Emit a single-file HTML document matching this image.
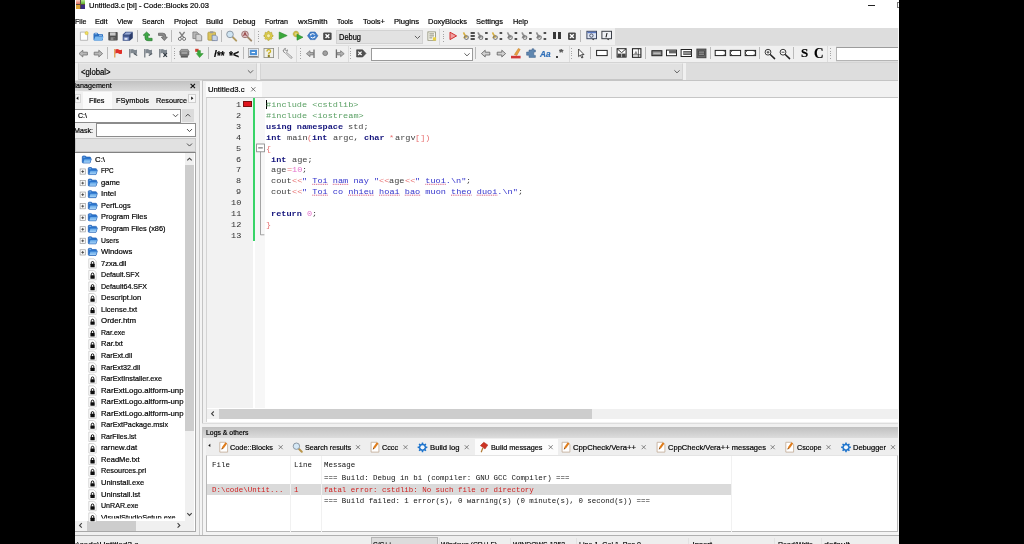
<!DOCTYPE html>
<html><head><meta charset="utf-8"><title>Untitled3.c [bi] - Code::Blocks 20.03</title>
<style>
html,body{margin:0;padding:0;background:#000;overflow:hidden}
#app{position:relative;width:1024px;height:544px;overflow:hidden;background:#000}
#app div{position:absolute;box-sizing:border-box}
#app span{position:absolute;white-space:pre;line-height:12px;height:12px;transform-origin:0 50%}
#app svg{position:absolute;left:0;top:0}
</style></head><body><div id="app">
<div style="left:75px;top:0px;width:824px;height:544px;background:#dddddd;"></div>
<div style="left:75px;top:0px;width:824px;height:28px;background:#ffffff;"></div>
<div style="left:76px;top:0px;width:8.8px;height:8.8px;background:#5a4a40;border-radius:0.8px"></div>
<div style="left:76px;top:0px;width:4.2px;height:4.3px;background:#f09888;background:linear-gradient(180deg,#fbd0c4,#e07060)"></div>
<div style="left:80.6px;top:0px;width:4.2px;height:4.3px;background:#80c840;background:linear-gradient(180deg,#b8e890,#60b030)"></div>
<div style="left:76px;top:4.7px;width:4.2px;height:4px;background:#dca434;"></div>
<div style="left:80.6px;top:4.7px;width:4.2px;height:4px;background:#3a2c80;"></div>
<div style="left:868px;top:5px;width:7px;height:1px;background:#222;"></div>
<div style="left:896.5px;top:1.5px;width:3px;height:6px;background:#fff;border:0.8px solid #777;border-right:none"></div>
<div style="left:75px;top:28px;width:539.5px;height:17px;background:#f0f0f0;"></div>
<div style="left:75px;top:45px;width:824px;height:17px;background:#f0f0f0;"></div>
<div style="left:826.6px;top:45.5px;width:0.8px;height:16.5px;background:#dcdcdc;"></div>
<div style="left:75px;top:44.6px;width:824px;height:0.8px;background:#e0e0e0;"></div>
<div style="left:75px;top:62px;width:824px;height:18.5px;background:#dddddd;"></div>
<div style="left:75px;top:62.4px;width:611px;height:17.6px;background:#f0f0f0;"></div>
<div style="left:75px;top:61.6px;width:824px;height:0.8px;background:#d4d4d4;"></div>
<div style="left:136.6px;top:30.2px;width:0.9px;height:11.6px;background:#bababa;"></div>
<div style="left:171.1px;top:30.2px;width:0.9px;height:11.6px;background:#bababa;"></div>
<div style="left:220.6px;top:30.2px;width:0.9px;height:11.6px;background:#bababa;"></div>
<div style="left:257.5px;top:31.2px;width:1px;height:1px;background:#a4a4a4;"></div>
<div style="left:257.5px;top:33.6px;width:1px;height:1px;background:#a4a4a4;"></div>
<div style="left:257.5px;top:36.0px;width:1px;height:1px;background:#a4a4a4;"></div>
<div style="left:257.5px;top:38.4px;width:1px;height:1px;background:#a4a4a4;"></div>
<div style="left:257.5px;top:40.8px;width:1px;height:1px;background:#a4a4a4;"></div>
<div style="left:442.5px;top:31.2px;width:1px;height:1px;background:#a4a4a4;"></div>
<div style="left:442.5px;top:33.6px;width:1px;height:1px;background:#a4a4a4;"></div>
<div style="left:442.5px;top:36.0px;width:1px;height:1px;background:#a4a4a4;"></div>
<div style="left:442.5px;top:38.4px;width:1px;height:1px;background:#a4a4a4;"></div>
<div style="left:442.5px;top:40.8px;width:1px;height:1px;background:#a4a4a4;"></div>
<div style="left:580.1px;top:30.2px;width:0.9px;height:11.6px;background:#bababa;"></div>
<div style="left:107.19999999999999px;top:47.2px;width:0.9px;height:11.6px;background:#bababa;"></div>
<div style="left:207.6px;top:47.2px;width:0.9px;height:11.6px;background:#bababa;"></div>
<div style="left:242.6px;top:47.2px;width:0.9px;height:11.6px;background:#bababa;"></div>
<div style="left:277.6px;top:47.2px;width:0.9px;height:11.6px;background:#bababa;"></div>
<div style="left:475.1px;top:47.2px;width:0.9px;height:11.6px;background:#bababa;"></div>
<div style="left:589.6px;top:47.2px;width:0.9px;height:11.6px;background:#bababa;"></div>
<div style="left:610.6px;top:47.2px;width:0.9px;height:11.6px;background:#bababa;"></div>
<div style="left:645.3000000000001px;top:47.2px;width:0.9px;height:11.6px;background:#bababa;"></div>
<div style="left:709.6px;top:47.2px;width:0.9px;height:11.6px;background:#bababa;"></div>
<div style="left:759.1px;top:47.2px;width:0.9px;height:11.6px;background:#bababa;"></div>
<div style="left:793.3000000000001px;top:47.2px;width:0.9px;height:11.6px;background:#bababa;"></div>
<div style="left:173.5px;top:48.2px;width:1px;height:1px;background:#a4a4a4;"></div>
<div style="left:173.5px;top:50.6px;width:1px;height:1px;background:#a4a4a4;"></div>
<div style="left:173.5px;top:53.0px;width:1px;height:1px;background:#a4a4a4;"></div>
<div style="left:173.5px;top:55.400000000000006px;width:1px;height:1px;background:#a4a4a4;"></div>
<div style="left:173.5px;top:57.800000000000004px;width:1px;height:1px;background:#a4a4a4;"></div>
<div style="left:299.5px;top:48.2px;width:1px;height:1px;background:#a4a4a4;"></div>
<div style="left:299.5px;top:50.6px;width:1px;height:1px;background:#a4a4a4;"></div>
<div style="left:299.5px;top:53.0px;width:1px;height:1px;background:#a4a4a4;"></div>
<div style="left:299.5px;top:55.400000000000006px;width:1px;height:1px;background:#a4a4a4;"></div>
<div style="left:299.5px;top:57.800000000000004px;width:1px;height:1px;background:#a4a4a4;"></div>
<div style="left:350.1px;top:48.2px;width:1px;height:1px;background:#a4a4a4;"></div>
<div style="left:350.1px;top:50.6px;width:1px;height:1px;background:#a4a4a4;"></div>
<div style="left:350.1px;top:53.0px;width:1px;height:1px;background:#a4a4a4;"></div>
<div style="left:350.1px;top:55.400000000000006px;width:1px;height:1px;background:#a4a4a4;"></div>
<div style="left:350.1px;top:57.800000000000004px;width:1px;height:1px;background:#a4a4a4;"></div>
<div style="left:570.5px;top:48.2px;width:1px;height:1px;background:#a4a4a4;"></div>
<div style="left:570.5px;top:50.6px;width:1px;height:1px;background:#a4a4a4;"></div>
<div style="left:570.5px;top:53.0px;width:1px;height:1px;background:#a4a4a4;"></div>
<div style="left:570.5px;top:55.400000000000006px;width:1px;height:1px;background:#a4a4a4;"></div>
<div style="left:570.5px;top:57.800000000000004px;width:1px;height:1px;background:#a4a4a4;"></div>
<div style="left:829.5px;top:48.2px;width:1px;height:1px;background:#a4a4a4;"></div>
<div style="left:829.5px;top:50.6px;width:1px;height:1px;background:#a4a4a4;"></div>
<div style="left:829.5px;top:53.0px;width:1px;height:1px;background:#a4a4a4;"></div>
<div style="left:829.5px;top:55.400000000000006px;width:1px;height:1px;background:#a4a4a4;"></div>
<div style="left:829.5px;top:57.800000000000004px;width:1px;height:1px;background:#a4a4a4;"></div>
<div style="left:336.2px;top:29.6px;width:87.3px;height:14.6px;background:#e2e2e2;border:1px solid #d2d2d2"></div>
<div style="left:370.5px;top:47.7px;width:102px;height:13.3px;background:#ffffff;border:1px solid #9a9a9a"></div>
<div style="left:835.6px;top:45.4px;width:64px;height:17px;background:#dfdfdf;"></div>
<div style="left:835.6px;top:47.3px;width:70px;height:14px;background:#ffffff;border:1px solid #b4b4b4;border-top-color:#9c9c9c"></div>
<div style="left:77.5px;top:63.4px;width:179px;height:16.5px;background:#e1e1e1;border:1px solid #d4d4d4;border-top-color:#e8e8e8;border-bottom-color:#c6c6c6"></div>
<div style="left:259.7px;top:63.4px;width:423.5px;height:16.5px;background:#e1e1e1;border:1px solid #d4d4d4;border-top-color:#e8e8e8;border-bottom-color:#c6c6c6"></div>
<div style="left:75px;top:80.5px;width:124.5px;height:454.5px;background:#f0f0f0;"></div>
<div style="left:75px;top:80.5px;width:124.3px;height:10.7px;background:#d2d2d2;background:linear-gradient(180deg,#c2c2c2,#dadada)"></div>
<div style="left:82.5px;top:92px;width:29px;height:16.5px;background:#fbfbfb;"></div>
<div style="left:188px;top:93.6px;width:8.4px;height:9.8px;background:#f6f6f6;border:0.6px solid #cfcfcf"></div>
<div style="left:75px;top:93.6px;width:6px;height:9.8px;background:#f6f6f6;border:0.6px solid #d8d8d8"></div>
<div style="left:74px;top:108.5px;width:107px;height:14px;background:#ffffff;border:1px solid #8c8c8c"></div>
<div style="left:181.5px;top:108.8px;width:12.9px;height:13.2px;background:#dbdbdb;"></div>
<div style="left:95.5px;top:123px;width:100.5px;height:14px;background:#ffffff;border:1px solid #8c8c8c"></div>
<div style="left:75px;top:137.5px;width:121px;height:14.5px;background:#e1e1e1;border:0.8px solid #c8c8c8"></div>
<div style="left:75px;top:152px;width:121px;height:380px;background:#ffffff;border-top:1px solid #828282;border-right:0.8px solid #a8a8a8;border-bottom:0.8px solid #a8a8a8"></div>
<div style="left:184.6px;top:153px;width:9.8px;height:367.5px;background:#f0f0f0;"></div>
<div style="left:184.6px;top:165px;width:9.8px;height:266px;background:#cdcdcd;"></div>
<div style="left:75px;top:520.5px;width:109.6px;height:10.2px;background:#f0f0f0;"></div>
<div style="left:86.5px;top:520.5px;width:49px;height:10.2px;background:#cdcdcd;"></div>
<div style="left:184.6px;top:520.5px;width:9.8px;height:10.2px;background:#f0f0f0;"></div>
<div style="left:199.3px;top:80.5px;width:1px;height:454.5px;background:#cacaca;"></div>
<div style="left:200.3px;top:80.5px;width:1.9px;height:454.5px;background:#f4f4f4;"></div>
<div style="left:202px;top:79.8px;width:697px;height:343.7px;background:#f1f1f1;border-left:1px solid #c4c4c4;border-top:1px solid #c4c4c4"></div>
<div style="left:205.5px;top:82px;width:56.5px;height:15px;background:#fbfbfb;"></div>
<div style="left:206px;top:97px;width:693px;height:325px;background:#ffffff;border-top:1px solid #c6c6c6;border-left:1px solid #d4d4d4"></div>
<div style="left:207px;top:98px;width:45.5px;height:310px;background:#f2f2f2;"></div>
<div style="left:252.5px;top:98px;width:2.5px;height:142.5px;background:#38d468;"></div>
<div style="left:255px;top:98px;width:9.6px;height:310px;background:#f7f7f7;"></div>
<div style="left:243.3px;top:100.6px;width:8.6px;height:6.2px;background:#e0141c;border:0.7px solid #7a1010"></div>
<div style="left:265.6px;top:99.5px;width:0.9px;height:9px;background:#000;"></div>
<div style="left:207px;top:408.5px;width:692px;height:10.5px;background:#f0f0f0;"></div>
<div style="left:219px;top:408.5px;width:372.5px;height:10.5px;background:#cdcdcd;"></div>
<div style="left:201.5px;top:423.5px;width:697.5px;height:4px;background:#f0f0f0;"></div>
<div style="left:202px;top:427px;width:697px;height:108px;background:#f4f4f4;border-left:1px solid #c4c4c4"></div>
<div style="left:203px;top:427.3px;width:696px;height:10.5px;background:#d2d2d2;background:linear-gradient(180deg,#c0c0c0,#dcdcdc)"></div>
<div style="left:205.5px;top:437.8px;width:693.5px;height:17px;background:#eeeeee;"></div>
<div style="left:475px;top:438.5px;width:82.5px;height:16.5px;background:#fcfcfc;"></div>
<div style="left:206px;top:455px;width:691.5px;height:77px;background:#ffffff;border:0.8px solid #b8b8b8;border-top-color:#e4e4e4"></div>
<div style="left:207px;top:483.6px;width:524.5px;height:11.6px;background:#dadada;"></div>
<div style="left:290px;top:455.5px;width:0.7px;height:76px;background:#f1f1f1;"></div>
<div style="left:321px;top:455.5px;width:0.7px;height:76px;background:#f1f1f1;"></div>
<div style="left:731px;top:455.5px;width:0.7px;height:76px;background:#f1f1f1;"></div>
<div style="left:75px;top:534.8px;width:824px;height:10px;background:#eeeeee;border-top:0.9px solid #b0b0b0"></div>
<div style="left:371px;top:537px;width:67px;height:9px;background:#dcdcdc;border:0.8px solid #b4b4b4"></div>
<div style="left:438.5px;top:537.5px;width:0.7px;height:8px;background:#e2e2e2;"></div>
<div style="left:509.5px;top:537.5px;width:0.7px;height:8px;background:#e2e2e2;"></div>
<div style="left:576px;top:537.5px;width:0.7px;height:8px;background:#e2e2e2;"></div>
<div style="left:688px;top:537.5px;width:0.7px;height:8px;background:#e2e2e2;"></div>
<div style="left:710px;top:537.5px;width:0.7px;height:8px;background:#e2e2e2;"></div>
<div style="left:774px;top:537.5px;width:0.7px;height:8px;background:#e2e2e2;"></div>
<div style="left:821px;top:537.5px;width:0.7px;height:8px;background:#e2e2e2;"></div>
<div style="left:254.2px;top:28.5px;width:0.8px;height:16.5px;background:#d8d8d8;"></div>
<div style="left:439.2px;top:28.5px;width:0.8px;height:16.5px;background:#d8d8d8;"></div>
<div style="left:171.2px;top:45.5px;width:0.8px;height:16.5px;background:#dcdcdc;"></div>
<div style="left:296.4px;top:45.5px;width:0.8px;height:16.5px;background:#dcdcdc;"></div>
<div style="left:347.6px;top:45.5px;width:0.8px;height:16.5px;background:#dcdcdc;"></div>
<div style="left:568.6px;top:45.5px;width:0.8px;height:16.5px;background:#dcdcdc;"></div>
<div style="left:553.2px;top:31.8px;width:2.8px;height:7.4px;background:#383838;"></div>
<div style="left:558px;top:31.8px;width:2.8px;height:7.4px;background:#383838;"></div>
<div style="left:556px;top:56.4px;width:1.8px;height:1.8px;background:#404040;"></div>
<svg width="1024" height="544" viewBox="0 0 1024 544">
<path d="M414.9 35.900000000000006L417.5 38.5L420.1 35.900000000000006" fill="none" stroke="#505050" stroke-width="0.9"/>
<path d="M464.4 53.300000000000004L467 55.9L469.6 53.300000000000004" fill="none" stroke="#505050" stroke-width="0.9"/>
<path d="M247.9 70.3L250.5 72.89999999999999L253.1 70.3" fill="none" stroke="#505050" stroke-width="0.9"/>
<path d="M674.4 70.3L677 72.89999999999999L679.6 70.3" fill="none" stroke="#505050" stroke-width="0.9"/>
<path d="M190.6 83.8l4.4 4.4m0-4.4l-4.4 4.4" stroke="#111" stroke-width="1.1"/>
<path d="M78.4 96.5l0 3.6l-2.2-1.8z" fill="#111"/>
<path d="M191.2 96.4l0 3.6l2.2-1.8z" fill="#111"/>
<path d="M173.0 114.25L175.5 116.75L178.0 114.25" fill="none" stroke="#444" stroke-width="0.95"/>
<path d="M185.70000000000002 116.39999999999999L187.9 114.2L190.1 116.39999999999999" fill="none" stroke="#444" stroke-width="1"/>
<path d="M187.0 129.05L189.5 131.55L192.0 129.05" fill="none" stroke="#444" stroke-width="0.95"/>
<path d="M187.0 143.55L189.5 146.05L192.0 143.55" fill="none" stroke="#444" stroke-width="0.95"/>
<path d="M187.3 160.4L189.5 158.20000000000002L191.7 160.4" fill="none" stroke="#404040" stroke-width="1.1"/>
<path d="M187.3 513.1999999999999L189.5 515.4L191.7 513.1999999999999" fill="none" stroke="#404040" stroke-width="1.1"/>
<path d="M81.8 523.2l-2.2 2.2l2.2 2.2" fill="none" stroke="#404040" stroke-width="1.1"/>
<path d="M177.6 523.2l2.2 2.2l-2.2 2.2" fill="none" stroke="#404040" stroke-width="1.1"/>
<defs><linearGradient id="fg" x1="0" y1="0" x2="0" y2="1"><stop offset="0" stop-color="#5fa4e6"/><stop offset="1" stop-color="#a8d4f8"/></linearGradient></defs>
<g transform="translate(81.8 155.5)"><path d="M0.5 1.4q0-0.9 0.9-0.9h2.2l1 1.1h3.4q0.9 0 0.9 0.9v0.9h0.6l-1.3 4.1h-6.8q-0.9 0-0.9-0.9z" fill="#2a74cc" stroke="#1d5cb2" stroke-width="0.7" stroke-linejoin="round"/><path d="M2.6 3.7h6.6l-1.2 3.5h-6.4z" fill="url(#fg)"/><path d="M1.4 1.7h2" stroke="#9cc8f4" stroke-width="0.7"/></g>
<rect x="80.1" y="168.948" width="5.2" height="5.2" fill="#fff" stroke="#9a9a9a" stroke-width="0.7"/><path d="M81.3 171.548h2.8M82.69999999999999 170.148v2.8" stroke="#333" stroke-width="0.8"/>
<g transform="translate(87.8 167.048)"><path d="M0.5 1.4q0-0.9 0.9-0.9h2.2l1 1.1h3.4q0.9 0 0.9 0.9v0.9h0.6l-1.3 4.1h-6.8q-0.9 0-0.9-0.9z" fill="#2a74cc" stroke="#1d5cb2" stroke-width="0.7" stroke-linejoin="round"/><path d="M2.6 3.7h6.6l-1.2 3.5h-6.4z" fill="url(#fg)"/><path d="M1.4 1.7h2" stroke="#9cc8f4" stroke-width="0.7"/></g>
<rect x="80.1" y="180.496" width="5.2" height="5.2" fill="#fff" stroke="#9a9a9a" stroke-width="0.7"/><path d="M81.3 183.096h2.8M82.69999999999999 181.696v2.8" stroke="#333" stroke-width="0.8"/>
<g transform="translate(87.8 178.596)"><path d="M0.5 1.4q0-0.9 0.9-0.9h2.2l1 1.1h3.4q0.9 0 0.9 0.9v0.9h0.6l-1.3 4.1h-6.8q-0.9 0-0.9-0.9z" fill="#2a74cc" stroke="#1d5cb2" stroke-width="0.7" stroke-linejoin="round"/><path d="M2.6 3.7h6.6l-1.2 3.5h-6.4z" fill="url(#fg)"/><path d="M1.4 1.7h2" stroke="#9cc8f4" stroke-width="0.7"/></g>
<rect x="80.1" y="192.044" width="5.2" height="5.2" fill="#fff" stroke="#9a9a9a" stroke-width="0.7"/><path d="M81.3 194.644h2.8M82.69999999999999 193.244v2.8" stroke="#333" stroke-width="0.8"/>
<g transform="translate(87.8 190.144)"><path d="M0.5 1.4q0-0.9 0.9-0.9h2.2l1 1.1h3.4q0.9 0 0.9 0.9v0.9h0.6l-1.3 4.1h-6.8q-0.9 0-0.9-0.9z" fill="#2a74cc" stroke="#1d5cb2" stroke-width="0.7" stroke-linejoin="round"/><path d="M2.6 3.7h6.6l-1.2 3.5h-6.4z" fill="url(#fg)"/><path d="M1.4 1.7h2" stroke="#9cc8f4" stroke-width="0.7"/></g>
<rect x="80.1" y="203.592" width="5.2" height="5.2" fill="#fff" stroke="#9a9a9a" stroke-width="0.7"/><path d="M81.3 206.192h2.8M82.69999999999999 204.792v2.8" stroke="#333" stroke-width="0.8"/>
<g transform="translate(87.8 201.692)"><path d="M0.5 1.4q0-0.9 0.9-0.9h2.2l1 1.1h3.4q0.9 0 0.9 0.9v0.9h0.6l-1.3 4.1h-6.8q-0.9 0-0.9-0.9z" fill="#2a74cc" stroke="#1d5cb2" stroke-width="0.7" stroke-linejoin="round"/><path d="M2.6 3.7h6.6l-1.2 3.5h-6.4z" fill="url(#fg)"/><path d="M1.4 1.7h2" stroke="#9cc8f4" stroke-width="0.7"/></g>
<rect x="80.1" y="215.14000000000001" width="5.2" height="5.2" fill="#fff" stroke="#9a9a9a" stroke-width="0.7"/><path d="M81.3 217.74h2.8M82.69999999999999 216.34v2.8" stroke="#333" stroke-width="0.8"/>
<g transform="translate(87.8 213.24)"><path d="M0.5 1.4q0-0.9 0.9-0.9h2.2l1 1.1h3.4q0.9 0 0.9 0.9v0.9h0.6l-1.3 4.1h-6.8q-0.9 0-0.9-0.9z" fill="#2a74cc" stroke="#1d5cb2" stroke-width="0.7" stroke-linejoin="round"/><path d="M2.6 3.7h6.6l-1.2 3.5h-6.4z" fill="url(#fg)"/><path d="M1.4 1.7h2" stroke="#9cc8f4" stroke-width="0.7"/></g>
<rect x="80.1" y="226.68800000000002" width="5.2" height="5.2" fill="#fff" stroke="#9a9a9a" stroke-width="0.7"/><path d="M81.3 229.288h2.8M82.69999999999999 227.888v2.8" stroke="#333" stroke-width="0.8"/>
<g transform="translate(87.8 224.788)"><path d="M0.5 1.4q0-0.9 0.9-0.9h2.2l1 1.1h3.4q0.9 0 0.9 0.9v0.9h0.6l-1.3 4.1h-6.8q-0.9 0-0.9-0.9z" fill="#2a74cc" stroke="#1d5cb2" stroke-width="0.7" stroke-linejoin="round"/><path d="M2.6 3.7h6.6l-1.2 3.5h-6.4z" fill="url(#fg)"/><path d="M1.4 1.7h2" stroke="#9cc8f4" stroke-width="0.7"/></g>
<rect x="80.1" y="238.23600000000002" width="5.2" height="5.2" fill="#fff" stroke="#9a9a9a" stroke-width="0.7"/><path d="M81.3 240.836h2.8M82.69999999999999 239.436v2.8" stroke="#333" stroke-width="0.8"/>
<g transform="translate(87.8 236.336)"><path d="M0.5 1.4q0-0.9 0.9-0.9h2.2l1 1.1h3.4q0.9 0 0.9 0.9v0.9h0.6l-1.3 4.1h-6.8q-0.9 0-0.9-0.9z" fill="#2a74cc" stroke="#1d5cb2" stroke-width="0.7" stroke-linejoin="round"/><path d="M2.6 3.7h6.6l-1.2 3.5h-6.4z" fill="url(#fg)"/><path d="M1.4 1.7h2" stroke="#9cc8f4" stroke-width="0.7"/></g>
<rect x="80.1" y="249.78400000000002" width="5.2" height="5.2" fill="#fff" stroke="#9a9a9a" stroke-width="0.7"/><path d="M81.3 252.38400000000001h2.8M82.69999999999999 250.984v2.8" stroke="#333" stroke-width="0.8"/>
<g transform="translate(87.8 247.88400000000001)"><path d="M0.5 1.4q0-0.9 0.9-0.9h2.2l1 1.1h3.4q0.9 0 0.9 0.9v0.9h0.6l-1.3 4.1h-6.8q-0.9 0-0.9-0.9z" fill="#2a74cc" stroke="#1d5cb2" stroke-width="0.7" stroke-linejoin="round"/><path d="M2.6 3.7h6.6l-1.2 3.5h-6.4z" fill="url(#fg)"/><path d="M1.4 1.7h2" stroke="#9cc8f4" stroke-width="0.7"/></g>
<g transform="translate(88.6 258.232)"><path d="M0.2 0.6h5l2.4 2.2v7.2h-7.4z" fill="#fff" stroke="#c4c4c4" stroke-width="0.7"/><rect x="1.8" y="5.5" width="4.3" height="3.4" rx="0.5" fill="#0c0c0c"/><path d="M2.7 5.7v-1.2a1.25 1.25 0 0 1 2.5 0v1.2" fill="none" stroke="#0c0c0c" stroke-width="1"/></g>
<g transform="translate(88.6 269.78000000000003)"><path d="M0.2 0.6h5l2.4 2.2v7.2h-7.4z" fill="#fff" stroke="#c4c4c4" stroke-width="0.7"/><rect x="1.8" y="5.5" width="4.3" height="3.4" rx="0.5" fill="#0c0c0c"/><path d="M2.7 5.7v-1.2a1.25 1.25 0 0 1 2.5 0v1.2" fill="none" stroke="#0c0c0c" stroke-width="1"/></g>
<g transform="translate(88.6 281.32800000000003)"><path d="M0.2 0.6h5l2.4 2.2v7.2h-7.4z" fill="#fff" stroke="#c4c4c4" stroke-width="0.7"/><rect x="1.8" y="5.5" width="4.3" height="3.4" rx="0.5" fill="#0c0c0c"/><path d="M2.7 5.7v-1.2a1.25 1.25 0 0 1 2.5 0v1.2" fill="none" stroke="#0c0c0c" stroke-width="1"/></g>
<g transform="translate(88.6 292.876)"><path d="M0.2 0.6h5l2.4 2.2v7.2h-7.4z" fill="#fff" stroke="#c4c4c4" stroke-width="0.7"/><rect x="1.8" y="5.5" width="4.3" height="3.4" rx="0.5" fill="#0c0c0c"/><path d="M2.7 5.7v-1.2a1.25 1.25 0 0 1 2.5 0v1.2" fill="none" stroke="#0c0c0c" stroke-width="1"/></g>
<g transform="translate(88.6 304.424)"><path d="M0.2 0.6h5l2.4 2.2v7.2h-7.4z" fill="#fff" stroke="#c4c4c4" stroke-width="0.7"/><rect x="1.8" y="5.5" width="4.3" height="3.4" rx="0.5" fill="#0c0c0c"/><path d="M2.7 5.7v-1.2a1.25 1.25 0 0 1 2.5 0v1.2" fill="none" stroke="#0c0c0c" stroke-width="1"/></g>
<g transform="translate(88.6 315.972)"><path d="M0.2 0.6h5l2.4 2.2v7.2h-7.4z" fill="#fff" stroke="#c4c4c4" stroke-width="0.7"/><rect x="1.8" y="5.5" width="4.3" height="3.4" rx="0.5" fill="#0c0c0c"/><path d="M2.7 5.7v-1.2a1.25 1.25 0 0 1 2.5 0v1.2" fill="none" stroke="#0c0c0c" stroke-width="1"/></g>
<g transform="translate(88.6 327.52)"><path d="M0.2 0.6h5l2.4 2.2v7.2h-7.4z" fill="#fff" stroke="#c4c4c4" stroke-width="0.7"/><rect x="1.8" y="5.5" width="4.3" height="3.4" rx="0.5" fill="#0c0c0c"/><path d="M2.7 5.7v-1.2a1.25 1.25 0 0 1 2.5 0v1.2" fill="none" stroke="#0c0c0c" stroke-width="1"/></g>
<g transform="translate(88.6 339.068)"><path d="M0.2 0.6h5l2.4 2.2v7.2h-7.4z" fill="#fff" stroke="#c4c4c4" stroke-width="0.7"/><rect x="1.8" y="5.5" width="4.3" height="3.4" rx="0.5" fill="#0c0c0c"/><path d="M2.7 5.7v-1.2a1.25 1.25 0 0 1 2.5 0v1.2" fill="none" stroke="#0c0c0c" stroke-width="1"/></g>
<g transform="translate(88.6 350.616)"><path d="M0.2 0.6h5l2.4 2.2v7.2h-7.4z" fill="#fff" stroke="#c4c4c4" stroke-width="0.7"/><rect x="1.8" y="5.5" width="4.3" height="3.4" rx="0.5" fill="#0c0c0c"/><path d="M2.7 5.7v-1.2a1.25 1.25 0 0 1 2.5 0v1.2" fill="none" stroke="#0c0c0c" stroke-width="1"/></g>
<g transform="translate(88.6 362.164)"><path d="M0.2 0.6h5l2.4 2.2v7.2h-7.4z" fill="#fff" stroke="#c4c4c4" stroke-width="0.7"/><rect x="1.8" y="5.5" width="4.3" height="3.4" rx="0.5" fill="#0c0c0c"/><path d="M2.7 5.7v-1.2a1.25 1.25 0 0 1 2.5 0v1.2" fill="none" stroke="#0c0c0c" stroke-width="1"/></g>
<g transform="translate(88.6 373.712)"><path d="M0.2 0.6h5l2.4 2.2v7.2h-7.4z" fill="#fff" stroke="#c4c4c4" stroke-width="0.7"/><rect x="1.8" y="5.5" width="4.3" height="3.4" rx="0.5" fill="#0c0c0c"/><path d="M2.7 5.7v-1.2a1.25 1.25 0 0 1 2.5 0v1.2" fill="none" stroke="#0c0c0c" stroke-width="1"/></g>
<g transform="translate(88.6 385.26)"><path d="M0.2 0.6h5l2.4 2.2v7.2h-7.4z" fill="#fff" stroke="#c4c4c4" stroke-width="0.7"/><rect x="1.8" y="5.5" width="4.3" height="3.4" rx="0.5" fill="#0c0c0c"/><path d="M2.7 5.7v-1.2a1.25 1.25 0 0 1 2.5 0v1.2" fill="none" stroke="#0c0c0c" stroke-width="1"/></g>
<g transform="translate(88.6 396.808)"><path d="M0.2 0.6h5l2.4 2.2v7.2h-7.4z" fill="#fff" stroke="#c4c4c4" stroke-width="0.7"/><rect x="1.8" y="5.5" width="4.3" height="3.4" rx="0.5" fill="#0c0c0c"/><path d="M2.7 5.7v-1.2a1.25 1.25 0 0 1 2.5 0v1.2" fill="none" stroke="#0c0c0c" stroke-width="1"/></g>
<g transform="translate(88.6 408.356)"><path d="M0.2 0.6h5l2.4 2.2v7.2h-7.4z" fill="#fff" stroke="#c4c4c4" stroke-width="0.7"/><rect x="1.8" y="5.5" width="4.3" height="3.4" rx="0.5" fill="#0c0c0c"/><path d="M2.7 5.7v-1.2a1.25 1.25 0 0 1 2.5 0v1.2" fill="none" stroke="#0c0c0c" stroke-width="1"/></g>
<g transform="translate(88.6 419.904)"><path d="M0.2 0.6h5l2.4 2.2v7.2h-7.4z" fill="#fff" stroke="#c4c4c4" stroke-width="0.7"/><rect x="1.8" y="5.5" width="4.3" height="3.4" rx="0.5" fill="#0c0c0c"/><path d="M2.7 5.7v-1.2a1.25 1.25 0 0 1 2.5 0v1.2" fill="none" stroke="#0c0c0c" stroke-width="1"/></g>
<g transform="translate(88.6 431.452)"><path d="M0.2 0.6h5l2.4 2.2v7.2h-7.4z" fill="#fff" stroke="#c4c4c4" stroke-width="0.7"/><rect x="1.8" y="5.5" width="4.3" height="3.4" rx="0.5" fill="#0c0c0c"/><path d="M2.7 5.7v-1.2a1.25 1.25 0 0 1 2.5 0v1.2" fill="none" stroke="#0c0c0c" stroke-width="1"/></g>
<g transform="translate(88.6 443.0)"><path d="M0.2 0.6h5l2.4 2.2v7.2h-7.4z" fill="#fff" stroke="#c4c4c4" stroke-width="0.7"/><rect x="1.8" y="5.5" width="4.3" height="3.4" rx="0.5" fill="#0c0c0c"/><path d="M2.7 5.7v-1.2a1.25 1.25 0 0 1 2.5 0v1.2" fill="none" stroke="#0c0c0c" stroke-width="1"/></g>
<g transform="translate(88.6 454.548)"><path d="M0.2 0.6h5l2.4 2.2v7.2h-7.4z" fill="#fff" stroke="#c4c4c4" stroke-width="0.7"/><rect x="1.8" y="5.5" width="4.3" height="3.4" rx="0.5" fill="#0c0c0c"/><path d="M2.7 5.7v-1.2a1.25 1.25 0 0 1 2.5 0v1.2" fill="none" stroke="#0c0c0c" stroke-width="1"/></g>
<g transform="translate(88.6 466.096)"><path d="M0.2 0.6h5l2.4 2.2v7.2h-7.4z" fill="#fff" stroke="#c4c4c4" stroke-width="0.7"/><rect x="1.8" y="5.5" width="4.3" height="3.4" rx="0.5" fill="#0c0c0c"/><path d="M2.7 5.7v-1.2a1.25 1.25 0 0 1 2.5 0v1.2" fill="none" stroke="#0c0c0c" stroke-width="1"/></g>
<g transform="translate(88.6 477.644)"><path d="M0.2 0.6h5l2.4 2.2v7.2h-7.4z" fill="#fff" stroke="#c4c4c4" stroke-width="0.7"/><rect x="1.8" y="5.5" width="4.3" height="3.4" rx="0.5" fill="#0c0c0c"/><path d="M2.7 5.7v-1.2a1.25 1.25 0 0 1 2.5 0v1.2" fill="none" stroke="#0c0c0c" stroke-width="1"/></g>
<g transform="translate(88.6 489.192)"><path d="M0.2 0.6h5l2.4 2.2v7.2h-7.4z" fill="#fff" stroke="#c4c4c4" stroke-width="0.7"/><rect x="1.8" y="5.5" width="4.3" height="3.4" rx="0.5" fill="#0c0c0c"/><path d="M2.7 5.7v-1.2a1.25 1.25 0 0 1 2.5 0v1.2" fill="none" stroke="#0c0c0c" stroke-width="1"/></g>
<g transform="translate(88.6 500.74)"><path d="M0.2 0.6h5l2.4 2.2v7.2h-7.4z" fill="#fff" stroke="#c4c4c4" stroke-width="0.7"/><rect x="1.8" y="5.5" width="4.3" height="3.4" rx="0.5" fill="#0c0c0c"/><path d="M2.7 5.7v-1.2a1.25 1.25 0 0 1 2.5 0v1.2" fill="none" stroke="#0c0c0c" stroke-width="1"/></g>
<g transform="translate(88.6 512.288)"><path d="M0.2 0.6h5l2.4 2.2v7.2h-7.4z" fill="#fff" stroke="#c4c4c4" stroke-width="0.7"/><rect x="1.8" y="5.5" width="4.3" height="3.4" rx="0.5" fill="#0c0c0c"/><path d="M2.7 5.7v-1.2a1.25 1.25 0 0 1 2.5 0v1.2" fill="none" stroke="#0c0c0c" stroke-width="1"/></g>
<path d="M251.2 87.2l4.2 4.2m0-4.2l-4.2 4.2" stroke="#555" stroke-width="0.8"/>
<path d="M312.3 184.3h15.4" stroke="#c83060" stroke-width="0.8" stroke-dasharray="1 0.8"/>
<path d="M332.8 184.3h15.4" stroke="#c83060" stroke-width="0.8" stroke-dasharray="1 0.8"/>
<path d="M425.3 184.3h20.6" stroke="#c83060" stroke-width="0.8" stroke-dasharray="1 0.8"/>
<path d="M312.3 195.2h15.4" stroke="#c83060" stroke-width="0.8" stroke-dasharray="1 0.8"/>
<path d="M348.2 195.2h25.7" stroke="#c83060" stroke-width="0.8" stroke-dasharray="1 0.8"/>
<path d="M379.1 195.2h20.6" stroke="#c83060" stroke-width="0.8" stroke-dasharray="1 0.8"/>
<path d="M404.8 195.2h15.4" stroke="#c83060" stroke-width="0.8" stroke-dasharray="1 0.8"/>
<path d="M451.0 195.2h20.6" stroke="#c83060" stroke-width="0.8" stroke-dasharray="1 0.8"/>
<path d="M476.7 195.2h20.6" stroke="#c83060" stroke-width="0.8" stroke-dasharray="1 0.8"/>
<rect x="256.6" y="144" width="7.8" height="7.8" fill="#fff" stroke="#808080" stroke-width="0.8"/><path d="M258.2 147.9h4.6" stroke="#333" stroke-width="0.8"/>
<path d="M260.5 151.8V234.8H264.4" fill="none" stroke="#808080" stroke-width="0.7"/>
<path d="M213.8 411.5l-2.2 2.2l2.2 2.2" fill="none" stroke="#404040" stroke-width="1.1"/>
<path d="M210.3 443.8l0 3.2l-2-1.6z" fill="#111"/>
<g transform="translate(219.29999999999998 441.8)"><path d="M0.5 0.5h5.6l2.2 2.2v7.6h-7.8z" fill="#fff" stroke="#c0aa94" stroke-width="0.8"/><path d="M2.2 7.8l0.6-2.6l3.4-4.8l1.7 1.2l-3.4 4.8z" fill="#de7c1c"/><path d="M2.2 7.8l0.4-1.6l1 0.7z" fill="#5a3a20"/></g>
<path d="M278.7 445.2l4 4m0-4l-4 4" stroke="#666" stroke-width="0.8"/>
<g transform="translate(297 447)"><path d="M1.6 1.6l3.2 3.2" stroke="#b89448" stroke-width="2" stroke-linecap="round"/><circle cx="-0.6" cy="-0.8" r="3.2" fill="#d4e8f6" stroke="#8c98a4" stroke-width="1"/></g>
<path d="M356 445.2l4 4m0-4l-4 4" stroke="#666" stroke-width="0.8"/>
<g transform="translate(370.6 441.8)"><path d="M0.5 0.5h5.6l2.2 2.2v7.6h-7.8z" fill="#fff" stroke="#c0aa94" stroke-width="0.8"/><path d="M2.2 7.8l0.6-2.6l3.4-4.8l1.7 1.2l-3.4 4.8z" fill="#de7c1c"/><path d="M2.2 7.8l0.4-1.6l1 0.7z" fill="#5a3a20"/></g>
<path d="M403.5 445.2l4 4m0-4l-4 4" stroke="#666" stroke-width="0.8"/>
<g transform="translate(422.5 447.3)"><path d="M4.85 -0.68L4.85 0.68L3.51 0.91L3.12 1.84L3.91 2.95L2.95 3.91L1.84 3.12L0.91 3.51L0.68 4.85L-0.68 4.85L-0.91 3.51L-1.84 3.12L-2.95 3.91L-3.91 2.95L-3.12 1.84L-3.51 0.91L-4.85 0.68L-4.85 -0.68L-3.51 -0.91L-3.12 -1.84L-3.91 -2.95L-2.95 -3.91L-1.84 -3.12L-0.91 -3.51L-0.68 -4.85L0.68 -4.85L0.91 -3.51L1.84 -3.12L2.95 -3.91L3.91 -2.95L3.12 -1.84L3.51 -0.91z" fill="#1f74cc"/><circle r="2.1" fill="#f4f8fc"/></g>
<path d="M464.7 445.2l4 4m0-4l-4 4" stroke="#666" stroke-width="0.8"/>
<g transform="translate(484 447)"><path d="M-3.6 -1.4l3.4-3.4l4 2.8l-2.8 4z" fill="#cc3424" stroke="#a82818" stroke-width="0.5" stroke-linejoin="round"/><path d="M-1.2 1l-1.6 4.2" stroke="#b07830" stroke-width="1.2"/></g>
<path d="M548.7 445.2l4 4m0-4l-4 4" stroke="#666" stroke-width="0.8"/>
<g transform="translate(561.6 441.8)"><path d="M0.5 0.5h5.6l2.2 2.2v7.6h-7.8z" fill="#fff" stroke="#c0aa94" stroke-width="0.8"/><path d="M2.2 7.8l0.6-2.6l3.4-4.8l1.7 1.2l-3.4 4.8z" fill="#de7c1c"/><path d="M2.2 7.8l0.4-1.6l1 0.7z" fill="#5a3a20"/></g>
<path d="M641.7 445.2l4 4m0-4l-4 4" stroke="#666" stroke-width="0.8"/>
<g transform="translate(656.6 441.8)"><path d="M0.5 0.5h5.6l2.2 2.2v7.6h-7.8z" fill="#fff" stroke="#c0aa94" stroke-width="0.8"/><path d="M2.2 7.8l0.6-2.6l3.4-4.8l1.7 1.2l-3.4 4.8z" fill="#de7c1c"/><path d="M2.2 7.8l0.4-1.6l1 0.7z" fill="#5a3a20"/></g>
<path d="M770.7 445.2l4 4m0-4l-4 4" stroke="#666" stroke-width="0.8"/>
<g transform="translate(785.3000000000001 441.8)"><path d="M0.5 0.5h5.6l2.2 2.2v7.6h-7.8z" fill="#fff" stroke="#c0aa94" stroke-width="0.8"/><path d="M2.2 7.8l0.6-2.6l3.4-4.8l1.7 1.2l-3.4 4.8z" fill="#de7c1c"/><path d="M2.2 7.8l0.4-1.6l1 0.7z" fill="#5a3a20"/></g>
<path d="M826.5 445.2l4 4m0-4l-4 4" stroke="#666" stroke-width="0.8"/>
<g transform="translate(846 447.3)"><path d="M4.85 -0.68L4.85 0.68L3.51 0.91L3.12 1.84L3.91 2.95L2.95 3.91L1.84 3.12L0.91 3.51L0.68 4.85L-0.68 4.85L-0.91 3.51L-1.84 3.12L-2.95 3.91L-3.91 2.95L-3.12 1.84L-3.51 0.91L-4.85 0.68L-4.85 -0.68L-3.51 -0.91L-3.12 -1.84L-3.91 -2.95L-2.95 -3.91L-1.84 -3.12L-0.91 -3.51L-0.68 -4.85L0.68 -4.85L0.91 -3.51L1.84 -3.12L2.95 -3.91L3.91 -2.95L3.12 -1.84L3.51 -0.91z" fill="#1f74cc"/><circle r="2.1" fill="#f4f8fc"/></g>
<path d="M891 445.2l4 4m0-4l-4 4" stroke="#666" stroke-width="0.8"/>
<g transform="translate(80 31.7)"><path d="M0.4 0.4h5l2.2 2.2v6h-7.2z" fill="#fff" stroke="#a8a8a8" stroke-width="0.8"/><circle cx="6.6" cy="1.4" r="1.6" fill="#f0e060" stroke="#c8b030" stroke-width="0.5"/></g>
<g transform="translate(93 32.2)"><path d="M0.5 2q0-1.5 1.5-1.5h2.2l1.2 1.2h3.4q1.2 0 1.2 1.2v4.4q0 1-1 1h-7.5q-1 0-1-1z" fill="#2a6fc0"/><path d="M2.4 4.2h8.3l-1.6 4h-8.2z" fill="#7ab8ee"/><path d="M1.6 1.6h2.4M6 3h3" stroke="#e8f0ff" stroke-width="0.7"/></g>
<g transform="translate(108 31.6)"><rect x="0.3" y="0.3" width="9.4" height="8.6" rx="0.8" fill="#505050"/><rect x="2" y="0.8" width="5.6" height="3.2" fill="#c8c8c8"/><rect x="2.6" y="5.6" width="4.6" height="3.3" fill="#8a8a8a"/><rect x="5.6" y="6" width="1" height="2.4" fill="#404040"/></g>
<g transform="translate(122.5 31.2)"><path d="M3 0.5h7.2v6.5l-3 2.6h-7v-6.4z" fill="#3f5488"/><path d="M3.6 1.2h5.8l-2.4 2h-5.4z" fill="#9fb0d8"/><path d="M1 5.6h5.4v3.4h-5.4z" fill="#6f83b8"/><path d="M7 4l3-2.6v5.4l-3 2.4z" fill="#2c3c68"/><rect x="2" y="6.6" width="3" height="2" fill="#dfe6f5"/></g>
<g transform="translate(143 31.6)"><path d="M3.6 0.4l3.4 3.2h-2v2.2q0 0.9 0.9 0.9h3.2v2.4h-4.2q-2.9 0-2.9-2.9v-2.6h-1.8z" fill="#3fa848" stroke="#267a2e" stroke-width="0.7" stroke-linejoin="round"/></g>
<g transform="translate(158 31.8)"><path d="M0.5 1.4h4.4q2.8 0 2.8 2.8v1.2h1.6l-3 3.4l-3-3.4h1.6v-1q0-0.8-0.8-0.8h-3.6z" fill="#8a8a8a" stroke="#5a5a5a" stroke-width="0.7" stroke-linejoin="round"/></g>
<g transform="translate(178 31.6)"><path d="M1.4 0.4l5 6.4M6.6 0.4l-5 6.4" stroke="#808080" stroke-width="1.3" fill="none"/><circle cx="1.9" cy="7.3" r="1.5" fill="#fff" stroke="#707070" stroke-width="1"/><circle cx="6.1" cy="7.3" r="1.5" fill="#fff" stroke="#707070" stroke-width="1"/></g>
<g transform="translate(192.5 31.6)"><path d="M0.4 0.4h4l1.6 1.6v5h-5.6z" fill="#b8b8b8" stroke="#7a7a7a" stroke-width="0.8"/><path d="M3.4 2.6h4l1.8 1.8v4.8h-5.8z" fill="#d4d4d4" stroke="#7a7a7a" stroke-width="0.8"/></g>
<g transform="translate(207.5 31)"><rect x="0.4" y="1.2" width="7.6" height="8" rx="0.8" fill="#dcc45c" stroke="#a89238" stroke-width="0.7"/><rect x="2.4" y="0.2" width="3.6" height="2" rx="0.6" fill="#9a9a9a"/><path d="M4.6 4.2h3.6l1.6 1.6v3.8h-5.2z" fill="#c8d4e8" stroke="#6878a0" stroke-width="0.7"/></g>
<g transform="translate(230 34.4)"><path d="M2 2l4.2 4.2" stroke="#b09a60" stroke-width="2" stroke-linecap="round"/><circle cx="0" cy="0" r="3.3" fill="#cfe4f2" stroke="#8e9aa6" stroke-width="1"/></g>
<g transform="translate(245 34.4)"><path d="M2 2l4.2 4.2" stroke="#a08868" stroke-width="2" stroke-linecap="round"/><circle cx="0" cy="0" r="3.3" fill="#e0c4c4" stroke="#a07878" stroke-width="1"/><path d="M-1.5 1.6l1.5-3.6l1.5 3.6M-0.9 0.4h1.8" stroke="#8a3030" stroke-width="0.8" fill="none"/></g>
<g transform="translate(268.5 35.8)"><path d="M4.56 -0.60L4.56 0.60L3.46 0.93L3.11 1.79L3.65 2.80L2.80 3.65L1.79 3.11L0.93 3.46L0.60 4.56L-0.60 4.56L-0.93 3.46L-1.79 3.11L-2.80 3.65L-3.65 2.80L-3.11 1.79L-3.46 0.93L-4.56 0.60L-4.56 -0.60L-3.46 -0.93L-3.11 -1.79L-3.65 -2.80L-2.80 -3.65L-1.79 -3.11L-0.93 -3.46L-0.60 -4.56L0.60 -4.56L0.93 -3.46L1.79 -3.11L2.80 -3.65L3.65 -2.80L3.11 -1.79L3.46 -0.93z" fill="#e0cf48" stroke="#a8982c" stroke-width="0.6"/><circle r="1.93" fill="#f6efb0" stroke="#a8982c" stroke-width="0.5"/></g>
<path d="M279.2 32l8 3.6l-8 3.6z" fill="#3aa83a" stroke="#2a8a2a" stroke-width="0.6" stroke-linejoin="round"/>
<g transform="translate(296 34)"><path d="M2.97 -0.39L2.97 0.39L2.26 0.61L2.03 1.17L2.38 1.83L1.83 2.38L1.17 2.03L0.61 2.26L0.39 2.97L-0.39 2.97L-0.61 2.26L-1.17 2.03L-1.83 2.38L-2.38 1.83L-2.03 1.17L-2.26 0.61L-2.97 0.39L-2.97 -0.39L-2.26 -0.61L-2.03 -1.17L-2.38 -1.83L-1.83 -2.38L-1.17 -2.03L-0.61 -2.26L-0.39 -2.97L0.39 -2.97L0.61 -2.26L1.17 -2.03L1.83 -2.38L2.38 -1.83L2.03 -1.17L2.26 -0.61z" fill="#e0cf48" stroke="#a8982c" stroke-width="0.6"/><circle r="1.26" fill="#f6efb0" stroke="#a8982c" stroke-width="0.5"/></g>
<path d="M297 34.2l6 3l-6 3z" fill="#3aa83a" stroke="#2a8a2a" stroke-width="0.6" stroke-linejoin="round"/>
<g transform="translate(312.7 35.8)"><path d="M-5.2 0l2.8-3.8h4.8l2.8 3.8l-2.8 3.8h-4.8z" fill="#3f7ecb" stroke="#2c62a8" stroke-width="0.6"/><path d="M-2 -1.4q2-1.6 4 0M2 1.4q-2 1.6-4 0" stroke="#fff" stroke-width="1" fill="none"/><path d="M-2.8 -0.4l1.6-0.2l-1-1.6zM2.8 0.4l-1.6 0.2l1 1.6z" fill="#fff"/></g>
<g transform="translate(323.2 32.4)"><rect x="0" y="0" width="8.4" height="7.6" rx="1.2" fill="#4a4a4a"/><path d="M2.3000000000000003 1.9l3.8 3.8m0-3.8l-3.8 3.8" stroke="#fff" stroke-width="1.4"/></g>
<g transform="translate(427.5 31.5)"><rect x="0.4" y="0.4" width="7.6" height="8.4" fill="#fdfdf4" stroke="#8a8a70" stroke-width="0.8"/><path d="M1.8 2.4h4.8M1.8 4.4h4.8M1.8 6.4h3" stroke="#6a6a58" stroke-width="0.8"/><rect x="5.4" y="5.8" width="3.2" height="3.2" fill="#e8d040"/></g>
<path d="M450 32.2l6.6 3.7l-6.6 3.7z" fill="#f0a0a0" stroke="#d03030" stroke-width="1" stroke-linejoin="round"/>
<g transform="translate(469 36)"><path d="M-5.4 -3.6q0.8 3.4 3.4 4.2M-1.8 0.8l-2.8 0.4l1.4-2.6" stroke="#d8b040" stroke-width="1.6" fill="none"/><circle cx="-2.6" cy="1.6" r="1.9" fill="none" stroke="#7c7c7c" stroke-width="1.1"/><rect x="1.6" y="-3.9" width="4.2" height="1.8" fill="#3c3c3c"/><rect x="1.6" y="-0.9" width="4.2" height="1.8" fill="#3c3c3c"/><rect x="1.6" y="2.1" width="4.2" height="1.8" fill="#3c3c3c"/></g>
<g transform="translate(483.5 36)"><path d="M-5.4 -3.6q0.8 3.4 3.4 4.2M-1.8 0.8l-2.8 0.4l1.4-2.6" stroke="#8c8c8c" stroke-width="1.6" fill="none"/><circle cx="-2.6" cy="1.6" r="1.9" fill="none" stroke="#7c7c7c" stroke-width="1.1"/><rect x="1.6" y="-3.9" width="2.6" height="1.8" fill="#3c3c3c"/><rect x="1.6" y="2.1" width="2.6" height="1.8" fill="#3c3c3c"/></g>
<g transform="translate(498 36)"><path d="M-5.4 -3.6q0.8 3.4 3.4 4.2M-1.8 0.8l-2.8 0.4l1.4-2.6" stroke="#d8b040" stroke-width="1.6" fill="none"/><circle cx="-2.6" cy="1.6" r="1.9" fill="none" stroke="#7c7c7c" stroke-width="1.1"/><rect x="1.6" y="-3.9" width="2.6" height="1.8" fill="#3c3c3c"/><rect x="1.6" y="2.1" width="2.6" height="1.8" fill="#3c3c3c"/></g>
<g transform="translate(513 36)"><path d="M-5.4 -3.6q0.8 3.4 3.4 4.2M-1.8 0.8l-2.8 0.4l1.4-2.6" stroke="#8c8c8c" stroke-width="1.6" fill="none"/><circle cx="-2.6" cy="1.6" r="1.9" fill="none" stroke="#7c7c7c" stroke-width="1.1"/><rect x="1.6" y="-3.9" width="2.6" height="1.8" fill="#3c3c3c"/><rect x="1.6" y="2.1" width="2.6" height="1.8" fill="#3c3c3c"/></g>
<g transform="translate(527.5 36)"><path d="M-5.4 -3.6q0.8 3.4 3.4 4.2M-1.8 0.8l-2.8 0.4l1.4-2.6" stroke="#8c8c8c" stroke-width="1.6" fill="none"/><circle cx="-2.6" cy="1.6" r="1.9" fill="none" stroke="#7c7c7c" stroke-width="1.1"/><rect x="1.6" y="-3.9" width="2.6" height="1.8" fill="#3c3c3c"/><rect x="1.6" y="2.1" width="2.6" height="1.8" fill="#3c3c3c"/></g>
<g transform="translate(542 36)"><path d="M-5.4 -3.6q0.8 3.4 3.4 4.2M-1.8 0.8l-2.8 0.4l1.4-2.6" stroke="#8c8c8c" stroke-width="1.6" fill="none"/><circle cx="-2.6" cy="1.6" r="1.9" fill="none" stroke="#7c7c7c" stroke-width="1.1"/><rect x="1.6" y="-3.9" width="2.6" height="1.8" fill="#3c3c3c"/><rect x="1.6" y="2.1" width="2.6" height="1.8" fill="#3c3c3c"/></g>
<g transform="translate(568 32.4)"><rect x="0" y="0" width="7.8" height="7.6" rx="1.2" fill="#4a4a4a"/><path d="M2.0 1.9l3.8 3.8m0-3.8l-3.8 3.8" stroke="#fff" stroke-width="1.4"/></g>
<g transform="translate(586.4 30.8)"><rect x="0.5" y="0.5" width="9.6" height="7.4" fill="#dfe6f4" stroke="#3c4660" stroke-width="1"/><rect x="1" y="1" width="8.6" height="1.4" fill="#5a78c0"/><circle cx="5" cy="4.8" r="1.7" fill="none" stroke="#404860" stroke-width="0.9"/><path d="M5.6 8.2h2.4l-1.2 1.2z" fill="#333"/></g>
<g transform="translate(601.4 30.8)"><rect x="0.5" y="0.5" width="9.6" height="7.4" fill="#eef0f4" stroke="#3c4048" stroke-width="1"/><path d="M5.6 2.2l-1 4.4" stroke="#222" stroke-width="1.1"/><path d="M5.6 8.2h2.4l-1.2 1.2z" fill="#333"/></g>
<g transform="translate(79 53.6)"><path d="M0 0l3.8-3.4v2h4.6v2.8h-4.6v2z" fill="#b8b8b8" stroke="#707070" stroke-width="0.8" stroke-linejoin="round"/></g>
<g transform="translate(102.6 53.6)"><path d="M0 0l-3.8-3.4v2h-4.6v2.8h4.6v2z" fill="#b8b8b8" stroke="#707070" stroke-width="0.8" stroke-linejoin="round"/></g>
<g transform="translate(113.8 48.6)"><path d="M1 0.4v8.4" stroke="#d89030" stroke-width="1.1"/><path d="M1.6 0.8q1.8-1 3.4 0t3.2 0v4.2q-1.6 1-3.2 0t-3.4 0z" fill="#e03028"/></g>
<g transform="translate(128.8 48.6)"><path d="M1 0.4v8.4" stroke="#606870" stroke-width="1.1"/><path d="M1.6 0.8q1.8-1 3.4 0t3.2 0v4.2q-1.6 1-3.2 0t-3.4 0z" fill="#808890"/><path d="M5 5l3.4 2" stroke="#505860" stroke-width="1.2"/></g>
<g transform="translate(143.8 48.6)"><path d="M1 0.4v8.4" stroke="#606870" stroke-width="1.1"/><path d="M1.6 0.8q1.8-1 3.4 0t3.2 0v4.2q-1.6 1-3.2 0t-3.4 0z" fill="#808890"/><path d="M5 7l3.4-2" stroke="#505860" stroke-width="1.2"/></g>
<g transform="translate(158.8 48.6)"><path d="M1 0.4v8.4" stroke="#606870" stroke-width="1.1"/><path d="M1.6 0.8q1.8-1 3.4 0t3.2 0v4.2q-1.6 1-3.2 0t-3.4 0z" fill="#808890"/><path d="M4.6 4.6l3.6 3.6m0-3.6l-3.6 3.6" stroke="#303840" stroke-width="1.2"/></g>
<g transform="translate(178.8 48.8)"><path d="M2.4 0.6h6.6l1.4 2.4h-9.6z" fill="#9a9a9a" stroke="#606060" stroke-width="0.6"/><path d="M0.8 3h9.6v2.4l-1.6 2.8h-6.4l-1.6-2.8z" fill="#707070"/><path d="M2.6 4.2h6" stroke="#d8d8d8" stroke-width="0.9"/><path d="M2 8.2h7" stroke="#404040" stroke-width="1"/></g>
<g transform="translate(195 48.2)"><rect x="0.2" y="0.6" width="3.4" height="3" fill="#d04030"/><path d="M2.6 2.4h2.8v3h2.8l-3.6 4l-3.2-4h1.2z" fill="#3aa83a" stroke="#2a8a2a" stroke-width="0.5"/></g>
<g transform="translate(248 48)"><rect x="0.4" y="0.4" width="10" height="9.2" fill="#f4f4f4" stroke="#a0a0a0" stroke-width="0.8"/><rect x="1.8" y="1.8" width="7.2" height="5.4" fill="#4a90d8"/><path d="M3.6 4.5h3.4" stroke="#fff" stroke-width="1.1"/><path d="M1 8.6h8.8" stroke="#707070" stroke-width="1"/></g>
<g transform="translate(263.6 48)"><rect x="0.4" y="0.4" width="9.6" height="9.2" fill="#f0f0e8" stroke="#8a8a80" stroke-width="0.8"/><path d="M3.4 3.4q0-1.8 1.8-1.8t1.8 1.6q0 1.2-1.8 2v1" stroke="#c8b020" stroke-width="1.3" fill="none"/><rect x="4.2" y="6.8" width="2" height="2.4" fill="#908020"/></g>
<g transform="translate(283 48.2)"><path d="M1 2.2q-0.6-2 1.6-2l-0.6 1.4l1.2 1l1.2-1q0.6 1.8-1 2.4l5.8 5.2q-0.4 1.2-1.6 0.8l-5.6-5.6q-1.4 0.2-2-2.2z" fill="#f4f4f4" stroke="#808080" stroke-width="0.8" stroke-linejoin="round"/></g>
<g transform="translate(306 49.4)"><path d="M8 0v8.6" stroke="#707070" stroke-width="1.3"/><path d="M0.4 4.3l3.6-3v1.8h3.4v2.4h-3.4v1.8z" fill="#b0b0b0" stroke="#707070" stroke-width="0.7" stroke-linejoin="round"/></g>
<circle cx="325.2" cy="53.2" r="2.4" fill="#a0a0a0" stroke="#707070" stroke-width="0.8"/>
<g transform="translate(335.4 49.4)"><path d="M1 0v8.6" stroke="#707070" stroke-width="1.3"/><path d="M8.8 4.3l-3.6-3v1.8h-3.4v2.4h3.4v1.8z" fill="#b0b0b0" stroke="#707070" stroke-width="0.7" stroke-linejoin="round"/></g>
<g transform="translate(356.2 49.4)"><path d="M0.4 0.4h6l3.4 3.6l-3.4 3.6h-6z" fill="#505050" stroke="#404040" stroke-width="0.6"/><path d="M2 2.2l3.4 3.4m0-3.4l-3.4 3.4" stroke="#fff" stroke-width="1.2"/></g>
<g transform="translate(481.4 53.6)"><path d="M0 0l3.8-3.4v2h4.6v2.8h-4.6v2z" fill="#d0d0d0" stroke="#606060" stroke-width="0.8" stroke-linejoin="round"/></g>
<g transform="translate(505.6 53.6)"><path d="M0 0l-3.8-3.4v2h-4.6v2.8h4.6v2z" fill="#d0d0d0" stroke="#606060" stroke-width="0.8" stroke-linejoin="round"/></g>
<g transform="translate(511 48)"><path d="M3.4 6.6l4-6.2l1.8 1l-3.4 6z" fill="#e8a040" stroke="#c07820" stroke-width="0.5"/><rect x="0" y="7.8" width="9.6" height="2.6" fill="#d03838"/></g>
<g transform="translate(526 48.6)"><path d="M0.6 3.4h2.4v-2h3v-1.2h1.8v1.2h1.6v2h-1.6v3.4h1.6v2h-6.4v-2.2h-2.4z" fill="#5f87b0" stroke="#3c5f88" stroke-width="0.5"/></g>
<g transform="translate(578 48.6)"><path d="M0.6 0.4v7.6l1.8-1.6l1.4 3l1.2-0.6l-1.4-2.8h2.4z" fill="#fff" stroke="#222" stroke-width="0.8" stroke-linejoin="round"/></g>
<rect x="596.6" y="50.4" width="10.6" height="5.2" fill="#fff" stroke="#222" stroke-width="1"/>
<g transform="translate(616.6 48.2)"><rect x="0.5" y="0.5" width="9" height="8.4" fill="#fff" stroke="#222" stroke-width="1"/><path d="M0.5 0.5l4.5 4l4.5-4" stroke="#222" stroke-width="0.9" fill="none"/><rect x="1" y="5.4" width="8" height="3.4" fill="#444"/><path d="M5 5v4" stroke="#fff" stroke-width="0.6"/></g>
<g transform="translate(632 48.2)"><rect x="0.5" y="0.5" width="8.4" height="8.6" fill="#fff" stroke="#222" stroke-width="1.1"/><path d="M6.4 0.5v8.6M0.5 6.6h8.4" stroke="#222" stroke-width="0.7"/><path d="M2 6l2-3.6l1.6 3.6z" fill="#888"/></g>
<g transform="translate(651.4 50.2)"><rect x="0.5" y="0.5" width="10" height="5" fill="#888" stroke="#222" stroke-width="1"/><path d="M2 3h7" stroke="#ddd" stroke-width="0.9"/></g>
<g transform="translate(666 49.6)"><rect x="0.5" y="0.5" width="10" height="5.6" fill="#fff" stroke="#222" stroke-width="1"/><rect x="3" y="0.8" width="7.2" height="3" fill="#666"/></g>
<g transform="translate(680.6 49)"><rect x="0.5" y="0.5" width="10.4" height="7" fill="#fff" stroke="#222" stroke-width="1"/><rect x="2.6" y="2" width="8" height="4" fill="#666"/><path d="M3 4h7" stroke="#ddd" stroke-width="0.7"/></g>
<g transform="translate(696.4 48.6)"><rect x="0.5" y="0.5" width="9" height="8.6" fill="#6a6a6a" stroke="#444" stroke-width="1"/><rect x="2" y="2.4" width="6" height="4.6" fill="#888" stroke="#333" stroke-width="0.6"/><path d="M2 4.7h6" stroke="#444" stroke-width="0.6"/></g>
<rect x="715.2" y="50.4" width="10.4" height="5.2" fill="#fff" stroke="#222" stroke-width="1"/>
<path d="M723.2 50.4l2.4 2.4M723.2 55.6l2.4-2.4" stroke="#222" stroke-width="0.7"/>
<rect x="730.2" y="50.4" width="10.4" height="5.2" fill="#fff" stroke="#222" stroke-width="1"/>
<path d="M732.6 50.4l-2.4 2.4M732.6 55.6l-2.4-2.4" stroke="#222" stroke-width="0.7"/>
<rect x="745.2" y="50.4" width="10.4" height="5.2" fill="#fff" stroke="#222" stroke-width="1"/>
<path d="M753.2 50.4l2.4 2.4M753.2 55.6l2.4-2.4M747.6 50.4l-2.4 2.4M747.6 55.6l-2.4-2.4" stroke="#222" stroke-width="0.7"/>
<g transform="translate(768 52.2)"><path d="M2 2l4.6 4.4" stroke="#222" stroke-width="1.5" stroke-linecap="round"/><circle r="2.9" fill="#fff" stroke="#222" stroke-width="0.9"/><path d="M-1.5 0h3" stroke="#222" stroke-width="0.8"/><path d="M0 -1.5v3" stroke="#222" stroke-width="0.8"/></g>
<g transform="translate(783 52.2)"><path d="M2 2l4.6 4.4" stroke="#222" stroke-width="1.5" stroke-linecap="round"/><circle r="2.9" fill="#fff" stroke="#222" stroke-width="0.9"/><path d="M-1.5 0h3" stroke="#222" stroke-width="0.8"/></g>
</svg>
<div id="txt" style="left:0;top:0;width:1024px;height:544px;will-change:transform">
<span style="-webkit-text-stroke:0.2px;left:88.7px;top:0px;font-family:'Liberation Sans', sans-serif;font-size:7.8px;color:#000;font-weight:400;transform:scaleX(0.9681);">Untitled3.c [bi] - Code::Blocks 20.03</span>
<span style="-webkit-text-stroke:0.2px;left:74.6px;top:16px;font-family:'Liberation Sans', sans-serif;font-size:7.8px;color:#000;font-weight:400;transform:scaleX(0.9063);">File</span>
<span style="-webkit-text-stroke:0.2px;left:95px;top:16px;font-family:'Liberation Sans', sans-serif;font-size:7.8px;color:#000;font-weight:400;transform:scaleX(0.9302);">Edit</span>
<span style="-webkit-text-stroke:0.2px;left:117px;top:16px;font-family:'Liberation Sans', sans-serif;font-size:7.8px;color:#000;font-weight:400;transform:scaleX(0.9245);">View</span>
<span style="-webkit-text-stroke:0.2px;left:142px;top:16px;font-family:'Liberation Sans', sans-serif;font-size:7.8px;color:#000;font-weight:400;transform:scaleX(0.9102);">Search</span>
<span style="-webkit-text-stroke:0.2px;left:173.7px;top:16px;font-family:'Liberation Sans', sans-serif;font-size:7.8px;color:#000;font-weight:400;transform:scaleX(0.9596);">Project</span>
<span style="-webkit-text-stroke:0.2px;left:206px;top:16px;font-family:'Liberation Sans', sans-serif;font-size:7.8px;color:#000;font-weight:400;transform:scaleX(0.9802);">Build</span>
<span style="-webkit-text-stroke:0.2px;left:232.5px;top:16px;font-family:'Liberation Sans', sans-serif;font-size:7.8px;color:#000;font-weight:400;transform:scaleX(0.9789);">Debug</span>
<span style="-webkit-text-stroke:0.2px;left:264.5px;top:16px;font-family:'Liberation Sans', sans-serif;font-size:7.8px;color:#000;font-weight:400;transform:scaleX(0.9149);">Fortran</span>
<span style="-webkit-text-stroke:0.2px;left:297.5px;top:16px;font-family:'Liberation Sans', sans-serif;font-size:7.8px;color:#000;font-weight:400;transform:scaleX(1.0011);">wxSmith</span>
<span style="-webkit-text-stroke:0.2px;left:337px;top:16px;font-family:'Liberation Sans', sans-serif;font-size:7.8px;color:#000;font-weight:400;transform:scaleX(0.8790);">Tools</span>
<span style="-webkit-text-stroke:0.2px;left:362.5px;top:16px;font-family:'Liberation Sans', sans-serif;font-size:7.8px;color:#000;font-weight:400;transform:scaleX(0.9664);">Tools+</span>
<span style="-webkit-text-stroke:0.2px;left:393.7px;top:16px;font-family:'Liberation Sans', sans-serif;font-size:7.8px;color:#000;font-weight:400;transform:scaleX(0.9774);">Plugins</span>
<span style="-webkit-text-stroke:0.2px;left:428px;top:16px;font-family:'Liberation Sans', sans-serif;font-size:7.8px;color:#000;font-weight:400;transform:scaleX(0.9574);">DoxyBlocks</span>
<span style="-webkit-text-stroke:0.2px;left:476px;top:16px;font-family:'Liberation Sans', sans-serif;font-size:7.8px;color:#000;font-weight:400;transform:scaleX(0.9579);">Settings</span>
<span style="-webkit-text-stroke:0.2px;left:512.5px;top:16px;font-family:'Liberation Sans', sans-serif;font-size:7.8px;color:#000;font-weight:400;transform:scaleX(0.9348);">Help</span>
<span style="-webkit-text-stroke:0.2px;left:338.8px;top:31px;font-family:'Liberation Sans', sans-serif;font-size:8.3px;color:#000;font-weight:400;transform:scaleX(0.8997);">Debug</span>
<span style="-webkit-text-stroke:0.2px;left:80.6px;top:66px;font-family:'Liberation Sans', sans-serif;font-size:8.3px;color:#000;font-weight:400;transform:scaleX(0.9295);">&lt;global&gt;</span>
<span style="-webkit-text-stroke:0.2px;left:70.3px;top:80px;font-family:'Liberation Sans', sans-serif;font-size:7.8px;color:#000;font-weight:400;transform:scaleX(0.9184);">Management</span>
<span style="-webkit-text-stroke:0.2px;left:89.2px;top:95px;font-family:'Liberation Sans', sans-serif;font-size:7.8px;color:#000;font-weight:400;transform:scaleX(0.9412);">Files</span>
<span style="-webkit-text-stroke:0.2px;left:115.5px;top:95px;font-family:'Liberation Sans', sans-serif;font-size:7.8px;color:#000;font-weight:400;transform:scaleX(0.9518);">FSymbols</span>
<span style="-webkit-text-stroke:0.2px;left:156px;top:95px;font-family:'Liberation Sans', sans-serif;font-size:7.8px;color:#000;font-weight:400;transform:scaleX(0.9288);">Resource</span>
<span style="-webkit-text-stroke:0.2px;left:78px;top:110px;font-family:'Liberation Sans', sans-serif;font-size:7.8px;color:#000;font-weight:400;transform:scaleX(0.9028);">C:\</span>
<span style="-webkit-text-stroke:0.2px;left:75px;top:125px;font-family:'Liberation Sans', sans-serif;font-size:7.8px;color:#000;font-weight:400;transform:scaleX(0.9136);margin-left:-1px;">Mask:</span>
<span style="-webkit-text-stroke:0.2px;left:95px;top:154px;font-family:'Liberation Sans', sans-serif;font-size:7.8px;color:#000;font-weight:400;transform:scaleX(1.0031);">C:\</span>
<span style="-webkit-text-stroke:0.2px;left:100.8px;top:165px;font-family:'Liberation Sans', sans-serif;font-size:7.8px;color:#000;font-weight:400;transform:scaleX(0.8136);">FPC</span>
<span style="-webkit-text-stroke:0.2px;left:100.8px;top:177px;font-family:'Liberation Sans', sans-serif;font-size:7.8px;color:#000;font-weight:400;transform:scaleX(0.9787);">game</span>
<span style="-webkit-text-stroke:0.2px;left:100.8px;top:188px;font-family:'Liberation Sans', sans-serif;font-size:7.8px;color:#000;font-weight:400;transform:scaleX(1.0237);">Intel</span>
<span style="-webkit-text-stroke:0.2px;left:100.8px;top:200px;font-family:'Liberation Sans', sans-serif;font-size:7.8px;color:#000;font-weight:400;transform:scaleX(0.9514);">PerfLogs</span>
<span style="-webkit-text-stroke:0.2px;left:100.8px;top:211px;font-family:'Liberation Sans', sans-serif;font-size:7.8px;color:#000;font-weight:400;transform:scaleX(0.9499);">Program Files</span>
<span style="-webkit-text-stroke:0.2px;left:100.8px;top:223px;font-family:'Liberation Sans', sans-serif;font-size:7.8px;color:#000;font-weight:400;transform:scaleX(0.9420);">Program Files (x86)</span>
<span style="-webkit-text-stroke:0.2px;left:100.8px;top:235px;font-family:'Liberation Sans', sans-serif;font-size:7.8px;color:#000;font-weight:400;transform:scaleX(0.8785);">Users</span>
<span style="-webkit-text-stroke:0.2px;left:100.8px;top:246px;font-family:'Liberation Sans', sans-serif;font-size:7.8px;color:#000;font-weight:400;transform:scaleX(0.9892);">Windows</span>
<span style="-webkit-text-stroke:0.2px;left:100.8px;top:258px;font-family:'Liberation Sans', sans-serif;font-size:7.8px;color:#000;font-weight:400;transform:scaleX(0.9608);">7zxa.dll</span>
<span style="-webkit-text-stroke:0.2px;left:100.8px;top:269px;font-family:'Liberation Sans', sans-serif;font-size:7.8px;color:#000;font-weight:400;transform:scaleX(0.9133);">Default.SFX</span>
<span style="-webkit-text-stroke:0.2px;left:100.8px;top:281px;font-family:'Liberation Sans', sans-serif;font-size:7.8px;color:#000;font-weight:400;transform:scaleX(0.9089);">Default64.SFX</span>
<span style="-webkit-text-stroke:0.2px;left:100.8px;top:292px;font-family:'Liberation Sans', sans-serif;font-size:7.8px;color:#000;font-weight:400;transform:scaleX(0.9764);">Descript.ion</span>
<span style="-webkit-text-stroke:0.2px;left:100.8px;top:304px;font-family:'Liberation Sans', sans-serif;font-size:7.8px;color:#000;font-weight:400;transform:scaleX(0.9656);">License.txt</span>
<span style="-webkit-text-stroke:0.2px;left:100.8px;top:315px;font-family:'Liberation Sans', sans-serif;font-size:7.8px;color:#000;font-weight:400;transform:scaleX(1.0123);">Order.htm</span>
<span style="-webkit-text-stroke:0.2px;left:100.8px;top:327px;font-family:'Liberation Sans', sans-serif;font-size:7.8px;color:#000;font-weight:400;transform:scaleX(0.9005);">Rar.exe</span>
<span style="-webkit-text-stroke:0.2px;left:100.8px;top:338px;font-family:'Liberation Sans', sans-serif;font-size:7.8px;color:#000;font-weight:400;transform:scaleX(0.9720);">Rar.txt</span>
<span style="-webkit-text-stroke:0.2px;left:100.8px;top:350px;font-family:'Liberation Sans', sans-serif;font-size:7.8px;color:#000;font-weight:400;transform:scaleX(0.9261);">RarExt.dll</span>
<span style="-webkit-text-stroke:0.2px;left:100.8px;top:362px;font-family:'Liberation Sans', sans-serif;font-size:7.8px;color:#000;font-weight:400;transform:scaleX(0.9207);">RarExt32.dll</span>
<span style="-webkit-text-stroke:0.2px;left:100.8px;top:373px;font-family:'Liberation Sans', sans-serif;font-size:7.8px;color:#000;font-weight:400;transform:scaleX(0.9322);">RarExtInstaller.exe</span>
<span style="-webkit-text-stroke:0.2px;left:100.8px;top:385px;font-family:'Liberation Sans', sans-serif;font-size:7.8px;color:#000;font-weight:400;transform:scaleX(0.9966);">RarExtLogo.altform-unp</span>
<span style="-webkit-text-stroke:0.2px;left:100.8px;top:396px;font-family:'Liberation Sans', sans-serif;font-size:7.8px;color:#000;font-weight:400;transform:scaleX(0.9966);">RarExtLogo.altform-unp</span>
<span style="-webkit-text-stroke:0.2px;left:100.8px;top:408px;font-family:'Liberation Sans', sans-serif;font-size:7.8px;color:#000;font-weight:400;transform:scaleX(0.9966);">RarExtLogo.altform-unp</span>
<span style="-webkit-text-stroke:0.2px;left:100.8px;top:419px;font-family:'Liberation Sans', sans-serif;font-size:7.8px;color:#000;font-weight:400;transform:scaleX(0.9257);">RarExtPackage.msix</span>
<span style="-webkit-text-stroke:0.2px;left:100.8px;top:431px;font-family:'Liberation Sans', sans-serif;font-size:7.8px;color:#000;font-weight:400;transform:scaleX(0.9051);">RarFiles.lst</span>
<span style="-webkit-text-stroke:0.2px;left:100.8px;top:442px;font-family:'Liberation Sans', sans-serif;font-size:7.8px;color:#000;font-weight:400;transform:scaleX(0.9912);">rarnew.dat</span>
<span style="-webkit-text-stroke:0.2px;left:100.8px;top:454px;font-family:'Liberation Sans', sans-serif;font-size:7.8px;color:#000;font-weight:400;transform:scaleX(0.9705);">ReadMe.txt</span>
<span style="-webkit-text-stroke:0.2px;left:100.8px;top:465px;font-family:'Liberation Sans', sans-serif;font-size:7.8px;color:#000;font-weight:400;transform:scaleX(0.9374);">Resources.pri</span>
<span style="-webkit-text-stroke:0.2px;left:100.8px;top:477px;font-family:'Liberation Sans', sans-serif;font-size:7.8px;color:#000;font-weight:400;transform:scaleX(0.9655);">Uninstall.exe</span>
<span style="-webkit-text-stroke:0.2px;left:100.8px;top:489px;font-family:'Liberation Sans', sans-serif;font-size:7.8px;color:#000;font-weight:400;transform:scaleX(0.9831);">Uninstall.lst</span>
<span style="-webkit-text-stroke:0.2px;left:100.8px;top:500px;font-family:'Liberation Sans', sans-serif;font-size:7.8px;color:#000;font-weight:400;transform:scaleX(0.9084);">UnRAR.exe</span>
<span style="-webkit-text-stroke:0.2px;left:100.8px;top:512px;font-family:'Liberation Sans', sans-serif;font-size:7.8px;color:#000;font-weight:400;transform:scaleX(0.9537);clip-path:inset(0 0 5.5px 0);">VisualStudioSetup.exe</span>
<span style="-webkit-text-stroke:0.2px;left:208.3px;top:84px;font-family:'Liberation Sans', sans-serif;font-size:7.8px;color:#000;font-weight:400;transform:scaleX(0.9907);">Untitled3.c</span>
<span style="left:235.66000000000003px;top:99px;font-family:'Liberation Mono', monospace;font-size:7.8px;color:#303030;font-weight:400;transform:scaleX(1.0965);">1</span>
<span style="left:235.66000000000003px;top:110px;font-family:'Liberation Mono', monospace;font-size:7.8px;color:#303030;font-weight:400;transform:scaleX(1.0965);">2</span>
<span style="left:235.66000000000003px;top:121px;font-family:'Liberation Mono', monospace;font-size:7.8px;color:#303030;font-weight:400;transform:scaleX(1.0965);">3</span>
<span style="left:235.66000000000003px;top:132px;font-family:'Liberation Mono', monospace;font-size:7.8px;color:#303030;font-weight:400;transform:scaleX(1.0965);">4</span>
<span style="left:235.66000000000003px;top:143px;font-family:'Liberation Mono', monospace;font-size:7.8px;color:#303030;font-weight:400;transform:scaleX(1.0965);">5</span>
<span style="left:235.66000000000003px;top:154px;font-family:'Liberation Mono', monospace;font-size:7.8px;color:#303030;font-weight:400;transform:scaleX(1.0965);">6</span>
<span style="left:235.66000000000003px;top:164px;font-family:'Liberation Mono', monospace;font-size:7.8px;color:#303030;font-weight:400;transform:scaleX(1.0965);">7</span>
<span style="left:235.66000000000003px;top:175px;font-family:'Liberation Mono', monospace;font-size:7.8px;color:#303030;font-weight:400;transform:scaleX(1.0965);">8</span>
<span style="left:235.66000000000003px;top:186px;font-family:'Liberation Mono', monospace;font-size:7.8px;color:#303030;font-weight:400;transform:scaleX(1.0965);">9</span>
<span style="left:230.52px;top:197px;font-family:'Liberation Mono', monospace;font-size:7.8px;color:#303030;font-weight:400;transform:scaleX(1.0984);">10</span>
<span style="left:230.52px;top:208px;font-family:'Liberation Mono', monospace;font-size:7.8px;color:#303030;font-weight:400;transform:scaleX(1.0984);">11</span>
<span style="left:230.52px;top:219px;font-family:'Liberation Mono', monospace;font-size:7.8px;color:#303030;font-weight:400;transform:scaleX(1.0984);">12</span>
<span style="left:230.52px;top:230px;font-family:'Liberation Mono', monospace;font-size:7.8px;color:#303030;font-weight:400;transform:scaleX(1.0984);">13</span>
<span style="left:266.0px;top:99px;font-family:'Liberation Mono', monospace;font-size:7.8px;color:#5aa064;font-weight:400;transform:scaleX(1.0984);">#include &lt;cstdlib&gt;</span>
<span style="left:266.0px;top:110px;font-family:'Liberation Mono', monospace;font-size:7.8px;color:#5aa064;font-weight:400;transform:scaleX(1.0985);">#include &lt;iostream&gt;</span>
<span style="left:266.0px;top:121px;font-family:'Liberation Mono', monospace;font-size:7.8px;color:#14147c;font-weight:700;transform:scaleX(1.0985);">using namespace</span>
<span style="left:348.24px;top:121px;font-family:'Liberation Mono', monospace;font-size:7.8px;color:#3e3e3e;font-weight:400;transform:scaleX(1.0984);">std;</span>
<span style="left:266.0px;top:132px;font-family:'Liberation Mono', monospace;font-size:7.8px;color:#14147c;font-weight:700;transform:scaleX(1.0978);">int</span>
<span style="left:286.56px;top:132px;font-family:'Liberation Mono', monospace;font-size:7.8px;color:#3e3e3e;font-weight:400;transform:scaleX(1.0984);">main</span>
<span style="left:307.12px;top:132px;font-family:'Liberation Mono', monospace;font-size:7.8px;color:#e87474;font-weight:400;transform:scaleX(1.0965);">(</span>
<span style="left:312.26px;top:132px;font-family:'Liberation Mono', monospace;font-size:7.8px;color:#14147c;font-weight:700;transform:scaleX(1.0978);">int</span>
<span style="left:332.82px;top:132px;font-family:'Liberation Mono', monospace;font-size:7.8px;color:#3e3e3e;font-weight:400;transform:scaleX(1.0984);">argc, </span>
<span style="left:363.65999999999997px;top:132px;font-family:'Liberation Mono', monospace;font-size:7.8px;color:#14147c;font-weight:700;transform:scaleX(1.0984);">char</span>
<span style="left:389.36px;top:132px;font-family:'Liberation Mono', monospace;font-size:7.8px;color:#e87474;font-weight:400;transform:scaleX(1.0965);">*</span>
<span style="left:394.5px;top:132px;font-family:'Liberation Mono', monospace;font-size:7.8px;color:#3e3e3e;font-weight:400;transform:scaleX(1.0984);">argv</span>
<span style="left:415.06px;top:132px;font-family:'Liberation Mono', monospace;font-size:7.8px;color:#e87474;font-weight:400;transform:scaleX(1.0978);">[])</span>
<span style="left:266.0px;top:143px;font-family:'Liberation Mono', monospace;font-size:7.8px;color:#e87474;font-weight:400;transform:scaleX(1.0965);">{</span>
<span style="left:271.14px;top:154px;font-family:'Liberation Mono', monospace;font-size:7.8px;color:#14147c;font-weight:700;transform:scaleX(1.0978);">int</span>
<span style="left:291.7px;top:154px;font-family:'Liberation Mono', monospace;font-size:7.8px;color:#3e3e3e;font-weight:400;transform:scaleX(1.0984);">age;</span>
<span style="left:271.14px;top:164px;font-family:'Liberation Mono', monospace;font-size:7.8px;color:#3e3e3e;font-weight:400;transform:scaleX(1.0978);">age</span>
<span style="left:286.56px;top:164px;font-family:'Liberation Mono', monospace;font-size:7.8px;color:#e87474;font-weight:400;transform:scaleX(1.0965);">=</span>
<span style="left:291.7px;top:164px;font-family:'Liberation Mono', monospace;font-size:7.8px;color:#e470cc;font-weight:400;transform:scaleX(1.0984);">10</span>
<span style="left:301.98px;top:164px;font-family:'Liberation Mono', monospace;font-size:7.8px;color:#3e3e3e;font-weight:400;transform:scaleX(1.0965);">;</span>
<span style="left:271.14px;top:175px;font-family:'Liberation Mono', monospace;font-size:7.8px;color:#3e3e3e;font-weight:400;transform:scaleX(1.0984);">cout</span>
<span style="left:291.7px;top:175px;font-family:'Liberation Mono', monospace;font-size:7.8px;color:#e87474;font-weight:400;transform:scaleX(1.0984);">&lt;&lt;</span>
<span style="left:301.98px;top:175px;font-family:'Liberation Mono', monospace;font-size:7.8px;color:#3434cc;font-weight:400;transform:scaleX(1.0985);">" Toi nam nay "</span>
<span style="left:379.08px;top:175px;font-family:'Liberation Mono', monospace;font-size:7.8px;color:#e87474;font-weight:400;transform:scaleX(1.0984);">&lt;&lt;</span>
<span style="left:389.36px;top:175px;font-family:'Liberation Mono', monospace;font-size:7.8px;color:#3e3e3e;font-weight:400;transform:scaleX(1.0978);">age</span>
<span style="left:404.78px;top:175px;font-family:'Liberation Mono', monospace;font-size:7.8px;color:#e87474;font-weight:400;transform:scaleX(1.0984);">&lt;&lt;</span>
<span style="left:415.06px;top:175px;font-family:'Liberation Mono', monospace;font-size:7.8px;color:#3434cc;font-weight:400;transform:scaleX(1.0984);">" tuoi.\n"</span>
<span style="left:466.46px;top:175px;font-family:'Liberation Mono', monospace;font-size:7.8px;color:#3e3e3e;font-weight:400;transform:scaleX(1.0965);">;</span>
<span style="left:271.14px;top:186px;font-family:'Liberation Mono', monospace;font-size:7.8px;color:#3e3e3e;font-weight:400;transform:scaleX(1.0984);">cout</span>
<span style="left:291.7px;top:186px;font-family:'Liberation Mono', monospace;font-size:7.8px;color:#e87474;font-weight:400;transform:scaleX(1.0984);">&lt;&lt;</span>
<span style="left:301.98px;top:186px;font-family:'Liberation Mono', monospace;font-size:7.8px;color:#3434cc;font-weight:400;transform:scaleX(1.0985);">" Toi co nhieu hoai bao muon theo duoi.\n"</span>
<span style="left:517.86px;top:186px;font-family:'Liberation Mono', monospace;font-size:7.8px;color:#3e3e3e;font-weight:400;transform:scaleX(1.0965);">;</span>
<span style="left:271.14px;top:208px;font-family:'Liberation Mono', monospace;font-size:7.8px;color:#14147c;font-weight:700;transform:scaleX(1.0984);">return</span>
<span style="left:307.12px;top:208px;font-family:'Liberation Mono', monospace;font-size:7.8px;color:#e470cc;font-weight:400;transform:scaleX(1.0965);">0</span>
<span style="left:312.26px;top:208px;font-family:'Liberation Mono', monospace;font-size:7.8px;color:#3e3e3e;font-weight:400;transform:scaleX(1.0965);">;</span>
<span style="left:266.0px;top:219px;font-family:'Liberation Mono', monospace;font-size:7.8px;color:#e87474;font-weight:400;transform:scaleX(1.0965);">}</span>
<span style="-webkit-text-stroke:0.2px;left:205.5px;top:427px;font-family:'Liberation Sans', sans-serif;font-size:7.4px;color:#000;font-weight:400;transform:scaleX(0.9318);">Logs &amp; others</span>
<span style="-webkit-text-stroke:0.2px;left:230px;top:442px;font-family:'Liberation Sans', sans-serif;font-size:7.8px;color:#000;font-weight:400;transform:scaleX(0.9361);">Code::Blocks</span>
<span style="-webkit-text-stroke:0.2px;left:304.5px;top:442px;font-family:'Liberation Sans', sans-serif;font-size:7.8px;color:#000;font-weight:400;transform:scaleX(0.9229);">Search results</span>
<span style="-webkit-text-stroke:0.2px;left:382px;top:442px;font-family:'Liberation Sans', sans-serif;font-size:7.8px;color:#000;font-weight:400;transform:scaleX(0.9234);">Cccc</span>
<span style="-webkit-text-stroke:0.2px;left:429.5px;top:442px;font-family:'Liberation Sans', sans-serif;font-size:7.8px;color:#000;font-weight:400;transform:scaleX(0.9859);">Build log</span>
<span style="-webkit-text-stroke:0.2px;left:490.5px;top:442px;font-family:'Liberation Sans', sans-serif;font-size:7.8px;color:#000;font-weight:400;transform:scaleX(0.9356);">Build messages</span>
<span style="-webkit-text-stroke:0.2px;left:572.5px;top:442px;font-family:'Liberation Sans', sans-serif;font-size:7.8px;color:#000;font-weight:400;transform:scaleX(0.9887);">CppCheck/Vera++</span>
<span style="-webkit-text-stroke:0.2px;left:667.7px;top:442px;font-family:'Liberation Sans', sans-serif;font-size:7.8px;color:#000;font-weight:400;transform:scaleX(0.9663);">CppCheck/Vera++ messages</span>
<span style="-webkit-text-stroke:0.2px;left:797px;top:442px;font-family:'Liberation Sans', sans-serif;font-size:7.8px;color:#000;font-weight:400;transform:scaleX(0.9267);">Cscope</span>
<span style="-webkit-text-stroke:0.2px;left:852.7px;top:442px;font-family:'Liberation Sans', sans-serif;font-size:7.8px;color:#000;font-weight:400;transform:scaleX(0.9635);">Debugger</span>
<span style="left:212px;top:459px;font-family:'Liberation Mono', monospace;font-size:6.9px;color:#111;font-weight:400;transform:scaleX(1.0791);">File</span>
<span style="left:293.7px;top:459px;font-family:'Liberation Mono', monospace;font-size:6.9px;color:#111;font-weight:400;transform:scaleX(1.0791);">Line</span>
<span style="left:324px;top:459px;font-family:'Liberation Mono', monospace;font-size:6.9px;color:#111;font-weight:400;transform:scaleX(1.0793);">Message</span>
<span style="left:324px;top:472px;font-family:'Liberation Mono', monospace;font-size:6.9px;color:#111;font-weight:400;transform:scaleX(1.0795);">=== Build: Debug in bi (compiler: GNU GCC Compiler) ===</span>
<span style="left:212px;top:484px;font-family:'Liberation Mono', monospace;font-size:6.9px;color:#d02020;font-weight:400;transform:scaleX(1.0794);">D:\code\Untit...</span>
<span style="left:293.7px;top:484px;font-family:'Liberation Mono', monospace;font-size:6.9px;color:#d02020;font-weight:400;transform:scaleX(1.0781);">1</span>
<span style="left:324px;top:484px;font-family:'Liberation Mono', monospace;font-size:6.9px;color:#d02020;font-weight:400;transform:scaleX(1.0795);">fatal error: cstdlib: No such file or directory</span>
<span style="left:324px;top:495px;font-family:'Liberation Mono', monospace;font-size:6.9px;color:#111;font-weight:400;transform:scaleX(1.0795);">=== Build failed: 1 error(s), 0 warning(s) (0 minute(s), 0 second(s)) ===</span>
<span style="-webkit-text-stroke:0.2px;left:68.6px;top:539px;font-family:'Liberation Sans', sans-serif;font-size:7.8px;color:#000;font-weight:400;transform:scaleX(1.0535);">D:\code\Untitled3.c</span>
<span style="-webkit-text-stroke:0.2px;left:373px;top:539px;font-family:'Liberation Sans', sans-serif;font-size:7.8px;color:#000;font-weight:400;transform:scaleX(0.8427);">C/C++</span>
<span style="-webkit-text-stroke:0.2px;left:440.5px;top:539px;font-family:'Liberation Sans', sans-serif;font-size:7.8px;color:#000;font-weight:400;transform:scaleX(0.8763);">Windows (CR+LF)</span>
<span style="-webkit-text-stroke:0.2px;left:513px;top:539px;font-family:'Liberation Sans', sans-serif;font-size:7.8px;color:#000;font-weight:400;transform:scaleX(0.8760);">WINDOWS-1252</span>
<span style="-webkit-text-stroke:0.2px;left:579px;top:539px;font-family:'Liberation Sans', sans-serif;font-size:7.8px;color:#000;font-weight:400;transform:scaleX(0.9109);">Line 1, Col 1, Pos 0</span>
<span style="-webkit-text-stroke:0.2px;left:692.6px;top:539px;font-family:'Liberation Sans', sans-serif;font-size:7.8px;color:#000;font-weight:400;transform:scaleX(1.0000);">Insert</span>
<span style="-webkit-text-stroke:0.2px;left:778px;top:539px;font-family:'Liberation Sans', sans-serif;font-size:7.8px;color:#000;font-weight:400;transform:scaleX(0.9007);">Read/Write</span>
<span style="-webkit-text-stroke:0.2px;left:824px;top:539px;font-family:'Liberation Sans', sans-serif;font-size:7.8px;color:#000;font-weight:400;transform:scaleX(1.1101);">default</span>
<span style="-webkit-text-stroke:0.2px;left:213.6px;top:48px;font-family:'Liberation Sans', sans-serif;font-size:9.4px;color:#000;font-weight:700;transform:scaleX(1.1497);">/</span>
<span style="-webkit-text-stroke:0.2px;left:216.6px;top:50px;font-family:'Liberation Sans', sans-serif;font-size:13px;color:#000;font-weight:700;transform:scaleX(0.7506);">**</span>
<span style="-webkit-text-stroke:0.2px;left:228.8px;top:50px;font-family:'Liberation Sans', sans-serif;font-size:13px;color:#000;font-weight:700;transform:scaleX(0.7901);">*</span>
<span style="-webkit-text-stroke:0.2px;left:233.2px;top:48px;font-family:'Liberation Sans', sans-serif;font-size:10.5px;color:#000;font-weight:700;transform:scaleX(0.9771);">&lt;</span>
<span style="-webkit-text-stroke:0.2px;left:540px;top:48px;font-family:'Liberation Sans', sans-serif;font-size:9.4px;color:#2f6fb8;font-weight:700;transform:scaleX(0.8845);font-style:italic;">Aa</span>
<span style="-webkit-text-stroke:0.2px;left:558.6px;top:46px;font-family:'Liberation Sans', sans-serif;font-size:9px;color:#505050;font-weight:700;transform:scaleX(1.2516);">*</span>
<span style="-webkit-text-stroke:0.2px;left:801px;top:47px;font-family:'Liberation Serif', serif;font-size:11.5px;color:#000;font-weight:700;transform:scaleX(1.1239);">S</span>
<span style="-webkit-text-stroke:0.2px;left:814.4px;top:48px;font-family:'Liberation Serif', serif;font-size:14px;color:#000;font-weight:700;transform:scaleX(0.9481);">C</span>
</div>
<div style="left:898.2px;top:28px;width:1px;height:506px;background:#f6f6f6;"></div>
<div style="left:0px;top:0px;width:75px;height:544px;background:#000;"></div>
<div style="left:899px;top:0px;width:125px;height:544px;background:#000;"></div>
</div></body></html>
